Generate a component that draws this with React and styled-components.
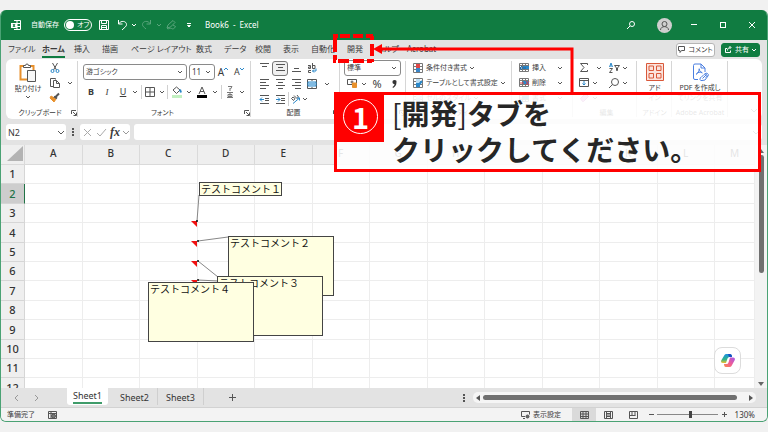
import React from 'react';
import styled, { createGlobalStyle, css } from 'styled-components';

const GREEN = '#107c41';
const INK = '#3b3b3b';
const BLUE = '#2b88c9';
const ORANGE = '#e8912d';

const GlobalStyle = createGlobalStyle`
  * { box-sizing: border-box; }
  body {
    margin: 0;
    background: #f1f1f1;
    color: ${INK};
    font-family: "Noto Sans", "Noto Sans CJK JP", sans-serif;
    font-size: 8px;
    line-height: 12px;
  }
  button, input, select {
    margin: 0;
    padding: 0;
    border: 0;
    background: none;
    color: inherit;
    font: inherit;
    line-height: inherit;
  }
  svg { display: block; flex: none; overflow: visible; }
`;

const Page = styled.div`
  position: relative;
  height: 100vh;
  padding: 10px 0;
  overflow: hidden;
`;

const AppWindow = styled.div`
  display: flex;
  flex-direction: column;
  height: 100%;
  border: 1px solid #4aa274;
  border-top: 0;
  border-radius: 6px;
  overflow: hidden;
  background: #e3e3e3;
`;

/* ---------- shared parts ---------- */

const Slot = styled.button`
  display: flex;
  flex: none;
  align-items: center;
  justify-content: center;
  width: ${(p) => p.$w || 16}px;
  height: ${(p) => p.$h || 14}px;
  white-space: nowrap;
`;

const Gap = styled.span`
  flex: ${(p) => (p.$w ? 'none' : '1')};
  width: ${(p) => p.$w || 0}px;
`;

const Divider = styled.span`
  flex: none;
  width: 1px;
  height: 14px;
  background: #d0d0d0;
`;

function Svg({ w = 12, h = 12, children, stroke = '#555', sw = 1, ...rest }) {
  return (
    <svg width={w} height={h} viewBox={`0 0 ${w} ${h}`} fill="none" stroke={stroke} strokeWidth={sw} aria-hidden="true" {...rest}>
      {children}
    </svg>
  );
}

const Chevron = ({ color = '#555', size = 4 }) => (
  <Svg w={size} h={size / 2} stroke={color}>
    <path d={`M0 0L${size / 2} ${size / 2}L${size} 0`} />
  </Svg>
);

const More = ({ w = 8, label }) => (
  <Slot $w={w} aria-label={label}><Chevron /></Slot>
);

/* ---------- title bar ---------- */

const TitleBar = styled.header`
  display: flex;
  flex: none;
  align-items: center;
  height: 30px;
  padding-left: 7px;
  background: ${GREEN};
  color: #fff;
`;

const AutoSave = styled.label`
  display: flex;
  align-items: center;
  gap: 5px;
  padding-left: 7px;
  font-size: 7px;
  font-feature-settings: "palt";
  white-space: nowrap;
`;

const Toggle = styled.span`
  display: flex;
  align-items: center;
  gap: 3px;
  width: 28px;
  height: 12px;
  padding-left: 1px;
  border: 1px solid #fff;
  border-radius: 6px;
`;

const ToggleInput = styled.input`
  appearance: none;
  flex: none;
  width: 8px;
  height: 8px;
  border-radius: 50%;
  background: #fff;
`;

const DocTitle = styled.h1`
  margin: 0;
  font-size: 8px;
  font-weight: 400;
  white-space: pre;
`;

const Avatar = styled.button`
  display: flex;
  align-items: center;
  justify-content: center;
  width: 15px;
  height: 15px;
  border-radius: 50%;
  background: #cfcfcf;
`;

/* ---------- ribbon tabs ---------- */

const TabBar = styled.nav`
  display: flex;
  flex: none;
  align-items: center;
  height: 19px;
  padding: 0 7px;
  font-feature-settings: "palt";
`;

const Tab = styled.button`
  flex: none;
  width: ${(p) => p.$w}px;
  height: 18px;
  text-align: left;
  white-space: nowrap;
  font-weight: ${(p) => (p.$active ? 700 : 400)};
  span {
    display: inline-block;
    line-height: 14px;
    border-bottom: ${(p) => (p.$active ? `2px solid ${GREEN}` : '2px solid transparent')};
  }
`;

const PillButton = styled.button`
  display: flex;
  align-items: center;
  justify-content: center;
  gap: 3px;
  width: 39px;
  height: 14px;
  border: 1px solid ${(p) => (p.$primary ? GREEN : '#b5b5b5')};
  border-radius: 3px;
  background: ${(p) => (p.$primary ? GREEN : '#fff')};
  color: ${(p) => (p.$primary ? '#fff' : INK)};
  font-size: 7px;
  white-space: nowrap;
`;

/* ---------- ribbon ---------- */

const Ribbon = styled.section`
  display: grid;
  flex: none;
  grid-template-columns: 72px 173px 89px 66px 106px 61px 64px 35px 56px 1fr;
  height: 60px;
  margin: 0 5px;
  border-radius: 6px;
  background: #fff;
  font-feature-settings: "palt";
`;

const Group = styled.div`
  display: flex;
  flex-direction: column;
  min-width: 0;
  padding: ${(p) => p.$pad || '1px 0 0 5px'};
  background: linear-gradient(#d6d6d6, #d6d6d6) right 2px / 1px 56px no-repeat;
  white-space: nowrap;
`;

const GroupBody = styled.div`
  display: flex;
  flex: 1;
  flex-direction: ${(p) => (p.$row ? 'row' : 'column')};
`;

const GroupFoot = styled.div`
  display: flex;
  align-items: center;
  justify-content: center;
  height: 12px;
  font-size: 7px;
  span { flex: 1; text-align: center; }
`;

const Line = styled.div`
  display: flex;
  align-items: center;
  height: ${(p) => p.$h || 15}px;
`;

const Stack = styled.div`
  display: flex;
  flex: none;
  flex-direction: column;
  align-items: center;
  width: ${(p) => p.$w}px;
`;

const BigButton = styled.button`
  display: flex;
  flex-direction: column;
  align-items: center;
  gap: 2px;
  width: 100%;
  padding-top: 3px;
  font-size: 7px;
  line-height: 10px;
  white-space: nowrap;
`;

const Command = styled.button`
  display: flex;
  flex: none;
  align-items: center;
  gap: 3px;
  width: ${(p) => (p.$w ? `${p.$w}px` : 'auto')};
  height: 15px;
  font-size: 7px;
  white-space: nowrap;
`;

const SelectBox = styled.label`
  display: grid;
  flex: none;
  grid-template-columns: 1fr 8px;
  align-items: center;
  width: ${(p) => p.$w}px;
  height: 16px;
  border: 1px solid #8a8a8a;
  border-radius: 3px;
  background: #fff;
  select {
    appearance: none;
    grid-area: 1 / 1 / 2 / 3;
    width: 100%;
    height: 14px;
    padding-left: 2px;
    font-size: ${(p) => p.$fs || 7}px;
  }
  svg { grid-area: 1 / 2; pointer-events: none; }
`;

const Letter = styled.span`
  font-size: ${(p) => p.$size || 9}px;
  ${(p) => p.$bold && css`font-weight: 700;`}
  ${(p) => p.$italic && css`font-family: "Liberation Serif", serif; font-style: italic;`}
  ${(p) => p.$under && css`text-decoration: underline;`}
`;

function Foot({ label, launcher }) {
  return (
    <GroupFoot>
      <span>{label}</span>
      {launcher && (
        <Slot $w={9} $h={9} aria-label={`${label}の設定`}>
          <Svg w={6} h={6}><path d="M.5 4V.5H5M2 2l3 3M5.5 2.5v3h-3" /></Svg>
        </Slot>
      )}
    </GroupFoot>
  );
}

const alignLines = {
  top: ['M0 1.5h9', 'M2 4.5h5'],
  middle: ['M0 2.5h9', 'M2 5.5h5', 'M0 8.5h9'],
  bottom: ['M2 6.5h5', 'M0 9.5h9'],
  left: ['M0 1.5h9', 'M0 4.5h6', 'M0 7.5h9', 'M0 10.5h6'],
  center: ['M0 1.5h9', 'M2 4.5h5', 'M0 7.5h9', 'M2 10.5h5'],
  right: ['M0 1.5h9', 'M3 4.5h6', 'M0 7.5h9', 'M3 10.5h6'],
};

const AlignIcon = ({ kind }) => (
  <Svg w={9} h={12}>{alignLines[kind].map((d) => <path key={d} d={d} />)}</Svg>
);

const IndentIcon = ({ out }) => (
  <Svg w={9} h={10}>
    <path d="M0 1.5h9M5 4.5h4M5 6.5h4M0 9.5h9" />
    <path d={out ? 'M4 5.5H0M2 3.5l-2 2 2 2' : 'M0 5.5h4M2 3.5l2 2-2 2'} stroke={BLUE} />
  </Svg>
);

const BoxedSlot = styled(Slot)`
  border: 1px solid #777;
  border-radius: 3px;
  background: #f0f0f0;
`;

function ClipboardGroup() {
  return (
    <Group>
      <GroupBody $row>
        <Stack $w={34}>
          <BigButton>
            <Svg w={18} h={19}>
              <path d="M5 3H1.5v13.500H8" stroke={ORANGE} strokeWidth="2" />
              <path d="M11 3h3.500v4" stroke={ORANGE} strokeWidth="2" />
              <path d="M4.500 4.500V2.500h2a1.500 1.500 0 0 1 3 0h2v2z" fill="#fff" />
              <path d="M8.500 7.500h8v11h-8z" fill="#f7f7f7" />
            </Svg>
            <span>貼り付け</span>
            <Chevron />
          </BigButton>
        </Stack>
        <Stack $w={20}>
          <Slot $h={15} aria-label="切り取り">
            <Svg w={8} h={10}>
              <path d="M1.500 0l4 7M6.500 0l-4 7" />
              <circle cx="1.500" cy="8" r="1.500" stroke={BLUE} /><circle cx="6.500" cy="8" r="1.500" stroke={BLUE} />
            </Svg>
          </Slot>
          <Slot $h={15} aria-label="コピー">
            <Svg w={10} h={10}><path d="M3.500 8.500h-3v-8h5v1" /><path d="M3.500 2.500h3l3 3v4h-6zM6.500 2.500v3h3" fill="#fff" /></Svg>
          </Slot>
          <Slot $h={15} aria-label="書式のコピー">
            <Svg w={10} h={9}>
              <path d="M1 3l5 3-2 3L0 5z" fill={ORANGE} stroke={ORANGE} />
              <path d="M4 3.500l3 2M5.500 4L9 .5" strokeWidth="2" />
            </Svg>
          </Slot>
        </Stack>
        <Stack $w={10}><Line $h={45}><More label="コピーのオプション" /></Line></Stack>
      </GroupBody>
      <Foot label="クリップボード" launcher />
    </Group>
  );
}

function FontGroup() {
  return (
    <Group>
      <GroupBody>
        <Line $h={24}>
          <SelectBox $w={104}>
            <select aria-label="フォント"><option>游ゴシック</option></select><Chevron />
          </SelectBox>
          <Gap $w={2} />
          <SelectBox $w={26} $fs={8}>
            <select aria-label="フォント サイズ"><option>11</option></select><Chevron />
          </SelectBox>
          <Slot aria-label="フォント サイズの拡大">
            <Letter $size={10}>A</Letter><Svg w={4} h={8}><path d="M0 2l2-2 2 2" stroke={BLUE} /></Svg>
          </Slot>
          <Slot aria-label="フォント サイズの縮小">
            <Letter $size={9}>A</Letter><Svg w={4} h={8}><path d="M0 0l2 2 2-2" stroke={BLUE} /></Svg>
          </Slot>
        </Line>
        <Line $h={15}>
          <Slot aria-label="太字"><Letter $bold>B</Letter></Slot>
          <Slot aria-label="斜体"><Letter $italic>I</Letter></Slot>
          <Slot aria-label="下線"><Letter $under>U</Letter></Slot>
          <More label="下線の種類" />
          <Gap $w={2} /><Divider />
          <Slot aria-label="罫線"><Svg w={10} h={10}><path d="M.5.5h9v9h-9zM5 0v10M0 5h10" /></Svg></Slot>
          <More label="罫線の種類" />
          <Gap $w={1} /><Divider /><Gap $w={1} />
          <Slot aria-label="塗りつぶしの色">
            <Svg w={10} h={12}><path d="M1 4l3.500-3L8 4 4.500 7.500z" /><path d="M8 3.500l1 3" stroke={BLUE} strokeWidth="2" /><path d="M0 10.500h10" stroke="#c1f0c1" strokeWidth="3" /></Svg>
          </Slot>
          <More label="塗りつぶしの色の選択" />
          <Slot $w={18} aria-label="フォントの色">
            <Svg w={10} h={12}><path d="M2 8l3-7 3 7M3 5.500h4" /><path d="M0 10.500h10" stroke="#000" strokeWidth="3" /></Svg>
          </Slot>
          <More label="フォントの色の選択" />
          <Gap $w={2} /><Divider />
          <Slot aria-label="ふりがな">
            <Svg w={6} h={12} stroke="#777"><path d="M1 .5h4L3.500 3M3 2v3M0 6.500h6M1 8.500h4v2H1zM0 11.500h6M3 6.500v5" /></Svg>
          </Slot>
          <More label="ふりがなの設定" />
        </Line>
      </GroupBody>
      <Foot label="フォント" launcher />
    </Group>
  );
}

function AlignmentGroup() {
  return (
    <Group>
      <GroupBody>
        <Line $h={16}>
          <Slot aria-label="上揃え"><AlignIcon kind="top" /></Slot>
          <BoxedSlot $h={15} aria-label="上下中央揃え"><AlignIcon kind="middle" /></BoxedSlot>
          <Slot aria-label="下揃え"><AlignIcon kind="bottom" /></Slot>
          <Slot aria-label="折り返して全体を表示する">
            <Svg w={9} h={10}>
              <path d="M0 2.500h2.500v3H.5v-1.500h2M4.500 0v5.500h2.500v-3H4.500M3 7.500H.5v2H3" />
              <path d="M8 5.500v2.500H4.500M6 6.500L4.500 8 6 9.500" stroke={BLUE} />
            </Svg>
          </Slot>
        </Line>
        <Line $h={15}>
          <Slot aria-label="左揃え"><AlignIcon kind="left" /></Slot>
          <Slot aria-label="中央揃え"><AlignIcon kind="center" /></Slot>
          <Slot aria-label="右揃え"><AlignIcon kind="right" /></Slot>
          <Slot aria-label="セルを結合して中央揃え">
            <Svg w={10} h={10}><path d="M.5.500h9v9h-9zM5 0v2M5 8v2" /><path d="M1 3h8v4H1z" fill="#d7ecfa" stroke={BLUE} /><path d="M2 5h6" stroke={BLUE} /></Svg>
          </Slot>
          <More w={14} label="セルの結合" />
        </Line>
        <Line $h={16}>
          <Slot aria-label="インデントを減らす"><IndentIcon out /></Slot>
          <Slot aria-label="インデントを増やす"><IndentIcon /></Slot>
          <Divider />
          <Slot $w={12} aria-label="方向">
            <Svg w={9} h={9}><path d="M.5 3.500l2 2 1.500-2-2-1.500zM3 .5l3 3 1.500-1.500-1.500-2" /><path d="M2 8.500L8.500 3M6 3h2.500v2.500" stroke={BLUE} /></Svg>
          </Slot>
          <More label="方向の選択" />
        </Line>
      </GroupBody>
      <Foot label="配置" launcher />
    </Group>
  );
}

function NumberGroup() {
  return (
    <Group $pad="1px 0 0 4px">
      <GroupBody>
        <Line $h={16}>
          <SelectBox $w={57}><select aria-label="表示形式"><option>標準</option></select><Chevron /></SelectBox>
        </Line>
        <Line>
          <Slot aria-label="通貨表示形式">
            <Svg w={10} h={9}><path d="M.5.500h9v5h-9z" /><circle cx="5" cy="3" r="1" /><path d="M5.500 4h4v4.500h-4z" fill={ORANGE} stroke={ORANGE} /></Svg>
          </Slot>
          <More label="通貨の選択" />
          <Slot $w={18} aria-label="パーセント"><Letter $size={11}>%</Letter></Slot>
          <Slot aria-label="桁区切り">
            <Svg w={5} h={8} stroke="none"><path d="M2.500 0a2 2 0 0 1 2 2.300C4.500 5 3 7 1 8L.5 7C2 6 2.500 5 2.500 4.200A2 2 0 0 1 2.500 0z" fill="#333" /></Svg>
          </Slot>
        </Line>
      </GroupBody>
      <Foot label="" launcher />
    </Group>
  );
}

const TableIcon = ({ a, b, brush }) => (
  <Svg w={10} h={10}>
    <path d="M.5.500h9v9h-9zM0 3.500h10M0 6.500h10M3.500 0v10M6.500 0v10" stroke="#777" />
    <path d="M3 1h4v4H3z" fill={a} stroke="none" /><path d="M3 5h4v4H3z" fill={b} stroke="none" />
    {brush && <path d="M4 9l5-6" stroke={b} strokeWidth="2" />}
  </Svg>
);

const styleCommands = [
  { text: '条件付き書式', a: '#e04848', b: '#3a86c8' },
  { text: 'テーブルとして書式設定', a: '#b9dcf3', b: '#2b88c9', brush: true },
  { text: 'セルのスタイル', a: '#b9dcf3', b: '#8cc4ea', brush: true },
];

function StylesGroup() {
  return (
    <Group $pad="1px 0 0 7px">
      <GroupBody>
        {styleCommands.map((c) => (
          <Command key={c.text}><TableIcon {...c} />{c.text}<Chevron /></Command>
        ))}
      </GroupBody>
      <Foot label="スタイル" />
    </Group>
  );
}

const cellCommands = [
  { text: '挿入', mark: 'M7 5H1M3 3L1 5l2 2' },
  { text: '削除', mark: 'M1 5h4M7 3l3 4M10 3L7 7' },
  { text: '書式', mark: 'M1 5h8' },
];

function CellsGroup() {
  return (
    <Group $pad="1px 0 0 7px">
      <GroupBody>
        {cellCommands.map((c, i) => (
          <Line key={c.text}>
            <Command $w={37}>
              <Svg w={10} h={9}>
                <path d="M.5.500h9v8h-9zM0 2.500h10M0 6.500h10M3.500 0v9M6.500 0v9" stroke="#777" />
                <path d="M4 3h6v3H4z" fill={BLUE} stroke="none" />
                <path d={c.mark} stroke={i === 1 ? '#d6404e' : '#1767a8'} />
              </Svg>
              {c.text}
            </Command>
            <More label={`${c.text}のオプション`} />
          </Line>
        ))}
      </GroupBody>
      <Foot label="" />
    </Group>
  );
}

function EditingGroup() {
  return (
    <Group $pad="1px 0 0 3px">
      <GroupBody>
        <Line>
          <Slot aria-label="合計"><Svg w={8} h={9}><path d="M7.500 2V.5H.5L4 4.500.5 8.500h7V7" /></Svg></Slot>
          <Gap $w={3} /><More label="合計の種類" />
          <Gap $w={4} />
          <Slot $w={14} aria-label="並べ替えとフィルター">
            <Svg w={11} h={10}><path d="M.5 4L2 0l1.500 4M1 3h2" stroke={BLUE} /><path d="M.5 5.500h3l-3 4h3M5.500 2.500h5L8.500 5v2.500h-1V5z" /></Svg>
          </Slot>
          <More label="並べ替えのオプション" />
        </Line>
        <Line>
          <Slot aria-label="フィル"><Svg w={10} h={9}><path d="M.5.500h9v8h-9zM0 2.500h10" /><path d="M5 3v4M3.500 5.500L5 7l1.500-1.500" stroke={BLUE} /></Svg></Slot>
          <More w={6} label="フィルのオプション" />
          <Gap $w={9} />
          <Slot $w={14} aria-label="検索と選択"><Svg w={10} h={10}><circle cx="6" cy="4" r="3.500" /><path d="M3.500 6.500L0 10" /></Svg></Slot>
          <More label="検索のオプション" />
        </Line>
        <Line>
          <Slot aria-label="クリア"><Svg w={9} h={9}><path d="M.5 5.500l5-5 3 3-5 5h-1z" fill="#d98ad6" stroke="#b04fae" /></Svg></Slot>
          <More w={6} label="クリアのオプション" />
        </Line>
      </GroupBody>
      <Foot label="編集" />
    </Group>
  );
}

function AddInGroup() {
  return (
    <Group $pad="1px 0 0 0">
      <GroupBody>
        <BigButton>
          <Svg w={18} h={18} stroke="#d9583a">
            <path d="M.5.500h17v17h-17zM3 3h4.500v4.500H3zM10.500 3H15v4.500h-4.500zM3 10.500h4.500V15H3zM10.500 10.500H15V15h-4.500z" fill="#fbe3dc" />
          </Svg>
          <span>アド<br />イン</span>
        </BigButton>
      </GroupBody>
      <Foot label="アドイン" />
    </Group>
  );
}

function AcrobatGroup() {
  return (
    <Group $pad="1px 0 0 0">
      <GroupBody>
        <BigButton>
          <Svg w={17} h={18} stroke="#4a7fe0">
            <path d="M6 16.500H3A1.500 1.500 0 0 1 1.500 15V2.500A1.500 1.500 0 0 1 3 1h6l4 4v4M9 1v4h4" />
            <path d="M4 11.500c2-1 3.500-4 3.200-6M7.200 6c.3 2 1.500 3.500 3.300 4M4.500 10.500c1.500-1.300 3.500-1.500 5.500-1.200" />
            <path d="M9 14.500l3-3a1.500 1.500 0 0 1 2.500 2l-1 1M14 12l-3.500 3.500M13 11a1.500 1.500 0 0 1 3 2l-3 4-3 .5a1.500 1.500 0 0 1-1-3" />
          </Svg>
          <span>PDF を作成し<br />てリンクを共有</span>
        </BigButton>
      </GroupBody>
      <Foot label="Adobe Acrobat" />
    </Group>
  );
}

const CollapseArea = styled.div`
  display: flex;
  align-items: flex-end;
  justify-content: flex-end;
  padding-bottom: 2px;
`;

/* ---------- formula bar ---------- */

const FormulaBar = styled.div`
  display: flex;
  flex: none;
  align-items: center;
  height: 26px;
  padding: 0 5px;
`;

const Field = styled.div`
  display: flex;
  flex: ${(p) => (p.$w ? 'none' : '1')};
  align-items: center;
  width: ${(p) => (p.$w ? `${p.$w}px` : 'auto')};
  height: 16px;
  border-radius: 3px;
  background: #fff;
  input { flex: 1; min-width: 0; height: 16px; padding-left: 2px; font-size: 9px; outline: 0; }
`;

const DotsIcon = () => (
  <Svg w={2} h={8} stroke="none" fill="#555"><path d="M0 0h2v2H0zM0 3h2v2H0zM0 6h2v2H0z" /></Svg>
);

/* ---------- sheet ---------- */

const SheetArea = styled.main`
  display: flex;
  flex: 1;
  min-height: 0;
  overflow: hidden;
`;

const Canvas = styled.div`
  position: relative;
  flex: 1;
  min-width: 0;
  overflow: hidden;
  background: #fff;
`;

const Grid = styled.table`
  width: 100%;
  table-layout: fixed;
  border-collapse: separate;
  border-spacing: 0;
  font-size: 10px;
  line-height: 14px;
  th, td { padding: 0; border: solid #ededed; border-width: 0 1px 1px 0; overflow: hidden; }
  th { background: #efefef; font-weight: 500; color: #333; text-align: center; }
  thead th { height: 18px; padding-bottom: 3px; border-color: #dadada; }
  tbody th { font-size: 11px; border-color: #d6d6d6; }
  tbody tr { height: 19px; }
  tbody tr:nth-child(5n + 2), tbody tr:nth-child(5n + 4) { height: 20px; }
`;

const HeadCol = styled.col`width: 24px;`;
const TailCol = styled.col`width: 40px;`;

const RowHead = styled.th`
  ${(p) => p.$current && css`
    && { background: #cdcdcd; color: #217346; border-right: 1px solid #217346; }
  `}
`;

const Corner = styled.th`
  svg { margin: 1px 0 0 6px; }
`;

const Note = styled.div`
  position: absolute;
  left: ${(p) => p.$x}px;
  top: ${(p) => p.$y}px;
  width: ${(p) => p.$w}px;
  height: ${(p) => p.$h}px;
  padding-left: 1px;
  border: 1px solid #444;
  background: #ffffe1;
  color: #111;
  font-family: "Noto Sans CJK JP", sans-serif;
  font-size: 10px;
  line-height: 12px;
  white-space: nowrap;
  overflow: hidden;
`;

const Leaders = styled.svg`
  position: absolute;
  left: 0;
  top: 0;
`;

const CopilotButton = styled.button`
  position: absolute;
  right: 14px;
  bottom: 14px;
  display: flex;
  align-items: center;
  justify-content: center;
  width: 27px;
  height: 27px;
  border: 1px solid #dcdcdc;
  border-radius: 8px;
  background: #fff;
`;

const VScroll = styled.div`
  display: flex;
  flex: none;
  flex-direction: column;
  align-items: center;
  width: 12px;
  padding: 4px 0 2px;
  background: #f3f3f3;
`;

const VThumb = styled.div`
  width: 5px;
  height: 118px;
  margin: 2px 0 auto;
  border-radius: 3px;
  background: #707070;
`;

const notes = [
  { text: 'テストコメント１', x: 198, y: 37, w: 83, h: 14 },
  { text: 'テストコメント２', x: 227, y: 91, w: 106, h: 60 },
  { text: 'テストコメント３', x: 216, y: 131, w: 106, h: 60 },
  { text: 'テストコメント４', x: 147, y: 137, w: 106, h: 60 },
];

const leaders = [
  [198, 50, 196, 76],
  [227, 92, 197, 96],
  [217, 132, 197, 116],
  [217, 136, 197, 135],
];

function Sheet() {
  const cols = 'ABCDEFGHIJKLM'.split('');
  const rows = Array.from({ length: 12 }, (_, i) => i + 1);
  return (
    <SheetArea>
      <Canvas>
        <Grid>
          <colgroup><HeadCol />{cols.slice(0, 12).map((c) => <col key={c} />)}<TailCol /></colgroup>
          <thead>
            <tr>
              <Corner aria-label="すべて選択"><Svg w={16} h={15} stroke="none"><path d="M16 0v15H0z" fill="#b3b3b3" /></Svg></Corner>
              {cols.map((c) => <th key={c} scope="col">{c}</th>)}
            </tr>
          </thead>
          <tbody>
            {rows.map((r) => (
              <tr key={r}>
                <RowHead scope="row" $current={r === 2}>{r}</RowHead>
                {cols.map((c) => <td key={c} />)}
              </tr>
            ))}
          </tbody>
        </Grid>
        <Leaders width="240" height="160" fill="none" aria-hidden="true">
          {leaders.map(([x1, y1, x2, y2]) => (
            <g key={y2}>
              <path d={`M190 ${y2}h6v6z`} fill="#f01010" />
              <path d={`M${x1} ${y1}L${x2} ${y2}`} stroke="#888" />
              <circle cx={x2} cy={y2} r="1" fill="#111" />
            </g>
          ))}
        </Leaders>
        {notes.map((n) => <Note key={n.text} $x={n.x} $y={n.y} $w={n.w} $h={n.h}>{n.text}</Note>)}
        <CopilotButton aria-label="Copilot">
          <Svg w={14} h={13} stroke="none">
            <defs>
              <linearGradient id="cool" x1="0" y1="0" x2="0" y2="1"><stop offset="0" stopColor="#1b8fe0" /><stop offset=".6" stopColor="#2fb48a" /><stop offset="1" stopColor="#f0c02c" /></linearGradient>
              <linearGradient id="warm" x1="1" y1="0" x2="0" y2="1"><stop offset="0" stopColor="#a05be8" /><stop offset=".5" stopColor="#ee5a9a" /><stop offset="1" stopColor="#fb8b4a" /></linearGradient>
            </defs>
            <path d="M3.500 1Q4 0 5.500 0H9q1.500 0 1.800 1.500L11 3H8.500Q7 3 6.500 4.500L5 9H2Q-.5 9 .2 6.500z" fill="url(#cool)" />
            <path d="M7 0h2q1.500 0 1.800 1.500L11 3H8z" fill="#1b4fc4" />
            <path d="M10.500 12Q10 13 8.500 13H5q-1.500 0-1.800-1.500L3 10h2.500Q7 10 7.500 8.500L9 3.500h3q2.500 0 1.800 2.500z" fill="url(#warm)" />
          </Svg>
        </CopilotButton>
      </Canvas>
      <VScroll>
        <Svg w={6} h={4} stroke="none"><path d="M3 0l3 4H0z" fill="#666" /></Svg>
        <VThumb />
        <Svg w={6} h={4} stroke="none"><path d="M3 4l3-4H0z" fill="#666" /></Svg>
      </VScroll>
    </SheetArea>
  );
}

/* ---------- sheet tabs and status bar ---------- */

const SheetTabs = styled.div`
  display: flex;
  flex: none;
  align-items: center;
  height: 19px;
  padding-right: 11px;
  font-size: 9px;
`;

const SheetTab = styled.button`
  height: 17px;
  width: ${(p) => (p.$active ? 41 : 46)}px;
  align-self: flex-start;
  border-radius: ${(p) => (p.$active ? '0 0 3px 3px' : '0')};
  background: ${(p) => (p.$active ? '#fff' : 'none')};
  border-right: ${(p) => (p.$active ? '0' : '1px solid #cfcfcf')};
  color: #333;
  padding-top: ${(p) => (p.$active ? 0 : 3)}px;
  span { display: inline-block; line-height: 13px; border-bottom: ${(p) => (p.$active ? '2px solid #3f9c6a' : '0')}; }
`;

const HScroll = styled.div`
  display: flex;
  flex: 0 1 283px;
  align-items: center;
  gap: 3px;
  height: 11px;
  padding: 0 3px;
  border-radius: 5px;
  background: #f5f5f5;
`;

const HThumb = styled.div`
  flex: 1;
  height: 5px;
  margin-right: 9px;
  border-radius: 3px;
  background: #707070;
`;

const StatusBar = styled.footer`
  display: flex;
  flex: none;
  align-items: center;
  height: 14px;
  padding: 0 12px 0 6px;
  border-top: 1px solid #d2d2d2;
  background: #f3f3f3;
  font-size: 7px;
  white-space: nowrap;
`;

const ViewButton = styled(Slot)`
  background: ${(p) => (p.$active ? '#dadada' : 'none')};
`;

const Zoom = styled.input`
  appearance: none;
  width: 61px;
  height: 7px;
  background: linear-gradient(#888, #888) center / 100% 1px no-repeat;
  &::-webkit-slider-thumb { appearance: none; width: 3px; height: 7px; background: #444; }
`;

const ZoomValue = styled.span`
  width: 25px;
  text-align: right;
  font-size: 8px;
`;

/* ---------- instruction callout ---------- */

const Pointer = styled.svg`
  position: absolute;
  left: 0;
  top: 0;
  pointer-events: none;
`;

const Callout = styled.aside`
  position: absolute;
  left: 334px;
  top: 92px;
  display: flex;
  width: 427px;
  height: 80px;
  border: 3px solid #f00;
  background: rgba(255, 255, 255, 0.88);
  font-family: "Noto Sans CJK JP", sans-serif;
`;

const StepNumber = styled.div`
  display: flex;
  align-items: center;
  justify-content: center;
  width: 47px;
  height: 47px;
  padding-bottom: 4px;
  background: #f00;
`;

const StepCircle = styled.span`
  width: 35px;
  height: 35px;
  border: 1px solid #fff;
  border-radius: 50%;
  color: #fff;
  font-size: 29px;
  font-weight: 700;
  line-height: 32px;
  text-align: center;
`;

const StepText = styled.p`
  margin: 0;
  padding-left: 8px;
  color: #262626;
  font-size: 28px;
  font-weight: 700;
  line-height: 36px;
  white-space: nowrap;
`;

const Bracket = styled.span`
  font-weight: 400;
`;

const tabs = [
  ['ファイル', 34], ['ホーム', 32], ['挿入', 28], ['描画', 29], ['ページ レイアウト', 65], ['数式', 28],
  ['データ', 31], ['校閲', 28], ['表示', 28], ['自動化', 36], ['開発', 29], ['ヘルプ', 31], ['Acrobat', 32],
];

export default function App() {
  return (
    <Page>
      <GlobalStyle />
      <AppWindow>
        <TitleBar>
          <Slot aria-label="Excel">
            <Svg w={10} h={10} stroke="#fff"><path d="M3 .5h6.500v9H3M6 .5v9M3 3.500h6.500M6 6.500h3.500" /><path d="M0 3h6v5H0z" fill="#fff" stroke="none" /><path d="M2 4l2 3M4 4L2 7" stroke={GREEN} /></Svg>
          </Slot>
          <AutoSave>自動保存<Toggle><ToggleInput type="checkbox" />オフ</Toggle></AutoSave>
          <Gap $w={4} />
          <Slot aria-label="上書き保存"><Svg w={10} h={10} stroke="#fff"><path d="M.5.500h9v9h-9zM2.500.500v3h5v-3M2.500 9.500v-4h5v4M3 7.500h4" /></Svg></Slot>
          <Slot $w={20} aria-label="元に戻す"><Svg w={9} h={10} stroke="#fff"><path d="M.5 0v4h4M.5 4C3 0 8.500 1 8.500 4.500 8.500 6.500 7 7 4 10" /></Svg></Slot>
          <Slot $w={4} aria-label="元に戻す操作"><Chevron color="#fff" /></Slot>
          <Slot $w={21} aria-label="やり直し"><Svg w={9} h={10} stroke="#5aa57c"><path d="M8.500 0v4h-4M8.500 4C6 0 .5 1 .5 4.500.5 6.500 2 7 4 9" /></Svg></Slot>
          <Slot $w={4} aria-label="やり直し操作"><Chevron color="#5aa57c" /></Slot>
          <Slot $w={20} aria-label="インク"><Svg w={10} h={10} stroke="#5aa57c"><path d="M1 8l1-3L7 .5l2 2L4.500 7zM1 8.500c2 1 3-1 4.500 0s3 0 4-2L7 5" /></Svg></Slot>
          <Slot aria-label="クイック アクセスのカスタマイズ"><Svg w={4} h={5} stroke="#fff"><path d="M0 .5h4M.5 2.500h3L2 4z" /></Svg></Slot>
          <Gap $w={8} />
          <DocTitle>Book6  -  Excel</DocTitle>
          <Gap />
          <Slot aria-label="検索"><Svg w={8} h={8} stroke="#fff"><circle cx="5" cy="3" r="2.500" /><path d="M3 5L0 8" /></Svg></Slot>
          <Gap $w={18} />
          <Avatar aria-label="アカウント"><Svg w={9} h={9} stroke="#555"><circle cx="4.500" cy="3" r="2.500" /><path d="M.5 9c0-4.500 8-4.500 8 0" /></Svg></Avatar>
          <Gap $w={7} />
          <Slot $w={29} aria-label="最小化"><Svg w={6} h={2} stroke="#fff"><path d="M0 .5h6" /></Svg></Slot>
          <Slot $w={29} aria-label="最大化"><Svg w={6} h={6} stroke="#fff"><rect x=".5" y=".5" width="5" height="5" /></Svg></Slot>
          <Slot $w={30} aria-label="閉じる"><Svg w={6} h={6} stroke="#fff"><path d="M0 0l6 6M6 0L0 6" /></Svg></Slot>
        </TitleBar>
        <TabBar>
          {tabs.map(([t, w]) => <Tab key={t} $w={w} $active={t === 'ホーム'}><span>{t}</span></Tab>)}
          <Gap />
          <PillButton><Svg w={7} h={7}><path d="M.5.500h6v4h-3l-1.500 2v-2H.5z" /></Svg>コメント</PillButton>
          <Gap $w={6} />
          <PillButton $primary><Svg w={7} h={7} stroke="#fff"><path d="M2 2.500H.5v4h5v-2M2.500 4.500c0-2 1-3 3-3M4.500 0L6 1.500 4.500 3" /></Svg>共有<Chevron color="#fff" /></PillButton>
        </TabBar>
        <Ribbon>
          <ClipboardGroup />
          <FontGroup />
          <AlignmentGroup />
          <NumberGroup />
          <StylesGroup />
          <CellsGroup />
          <EditingGroup />
          <AddInGroup />
          <AcrobatGroup />
          <CollapseArea><Slot aria-label="リボンを折りたたむ"><Chevron size={6} /></Slot></CollapseArea>
        </Ribbon>
        <FormulaBar>
          <Field $w={60}><input aria-label="名前ボックス" defaultValue="N2" /><Slot $w={10} aria-label="名前の一覧"><Chevron size={6} /></Slot></Field>
          <Slot $w={14} aria-label="サイズ変更"><DotsIcon /></Slot>
          <Field $w={50}>
            <Slot $w={14} aria-label="キャンセル"><Svg w={7} h={7} stroke="#aaa"><path d="M0 0l7 7M7 0L0 7" /></Svg></Slot>
            <Slot $w={14} aria-label="入力"><Svg w={9} h={7} stroke="#aaa"><path d="M0 4l3 3 6-7" /></Svg></Slot>
            <Slot $w={14} aria-label="関数の挿入"><Letter $italic $bold $size={12}>fx</Letter></Slot>
            <Slot $w={8} aria-label="関数の一覧"><Chevron size={6} color="#999" /></Slot>
          </Field>
          <Gap $w={4} />
          <Field><input aria-label="数式バー" /><Slot $w={12} aria-label="数式バーの展開"><Chevron size={6} /></Slot></Field>
        </FormulaBar>
        <Sheet />
        <SheetTabs>
          <Gap $w={5} />
          <Slot $w={20} aria-label="前のシート"><Svg w={3} h={6} stroke="#999"><path d="M3 0L0 3l3 3" /></Svg></Slot>
          <Slot $w={20} aria-label="次のシート"><Svg w={3} h={6} stroke="#999"><path d="M0 0l3 3-3 3" /></Svg></Slot>
          <Gap $w={21} />
          <SheetTab $active><span>Sheet1</span></SheetTab>
          <Gap $w={4} />
          <SheetTab>Sheet2</SheetTab>
          <SheetTab>Sheet3</SheetTab>
          <Gap $w={20} />
          <Slot aria-label="新しいシート"><Svg w={7} h={7}><path d="M0 3.500h7M3.500 0v7" /></Svg></Slot>
          <Gap />
          <Slot $w={18} aria-label="タブの幅"><DotsIcon /></Slot>
          <HScroll>
            <Svg w={4} h={6} stroke="none"><path d="M4 0v6L0 3z" fill="#555" /></Svg>
            <HThumb />
            <Svg w={4} h={6} stroke="none"><path d="M0 0v6l4-3z" fill="#555" /></Svg>
          </HScroll>
        </SheetTabs>
        <StatusBar>
          準備完了
          <Gap $w={9} />
          <Slot aria-label="マクロの記録"><Svg w={9} h={8}><path d="M.5.500h8v7h-8zM0 2.500h9M3 .5v7" /><circle cx="5.500" cy="5" r="2" fill="#777" /></Svg></Slot>
          <Gap />
          <Command $w={51}><Svg w={9} h={8}><path d="M4 5.500H.5v-5h8v3M2 7.500h2" /><circle cx="6.500" cy="5.500" r="1.500" fill="#666" /></Svg>表示設定</Command>
          <ViewButton $active $w={24} $h={13} aria-label="標準"><Svg w={9} h={8}><path d="M.5.500h8v7h-8zM0 3h9M0 5.500h9M3 0v8M6 0v8" /></Svg></ViewButton>
          <ViewButton $w={25} $h={13} aria-label="ページ レイアウト"><Svg w={9} h={8}><path d="M.5.500h8v7h-8zM2.500 1v6M6.500 1v6M3 2.500h3M3 4h3M3 5.500h3" /></Svg></ViewButton>
          <ViewButton $w={24} $h={13} aria-label="改ページ プレビュー"><Svg w={9} h={8}><path d="M.5.500h8v7h-8zM3 .5v4M.5 4.500h6M6 .5v4" /></Svg></ViewButton>
          <Slot $w={12} $h={12} aria-label="縮小"><Svg w={5} h={5}><path d="M0 2.500h5" /></Svg></Slot>
          <Zoom type="range" min="10" max="230" defaultValue="130" aria-label="ズーム" />
          <Slot $w={12} $h={12} aria-label="拡大"><Svg w={5} h={5}><path d="M0 2.500h5M2.500 0v5" /></Svg></Slot>
          <ZoomValue>130%</ZoomValue>
        </StatusBar>
      </AppWindow>
      <Callout>
        <StepNumber><StepCircle>1</StepCircle></StepNumber>
        <StepText><Bracket>[</Bracket>開発<Bracket>]</Bracket>タブを<br />クリックしてください。</StepText>
      </Callout>
      <Pointer width="600" height="100" fill="none" stroke="#f00" aria-hidden="true">
        <path d="M333 36h5M340 36h10M353 36h10M366 36h7M333 61h3M338 61h11M353 61h11M367 61h5M335 38v14M335 55v5M372 36v4M372 44v12M372 59v3" strokeWidth="4" />
        <path d="M380 49h192v44" strokeWidth="3" />
        <path d="M373 49l9-5v10z" fill="#f00" stroke="none" />
      </Pointer>
    </Page>
  );
}
